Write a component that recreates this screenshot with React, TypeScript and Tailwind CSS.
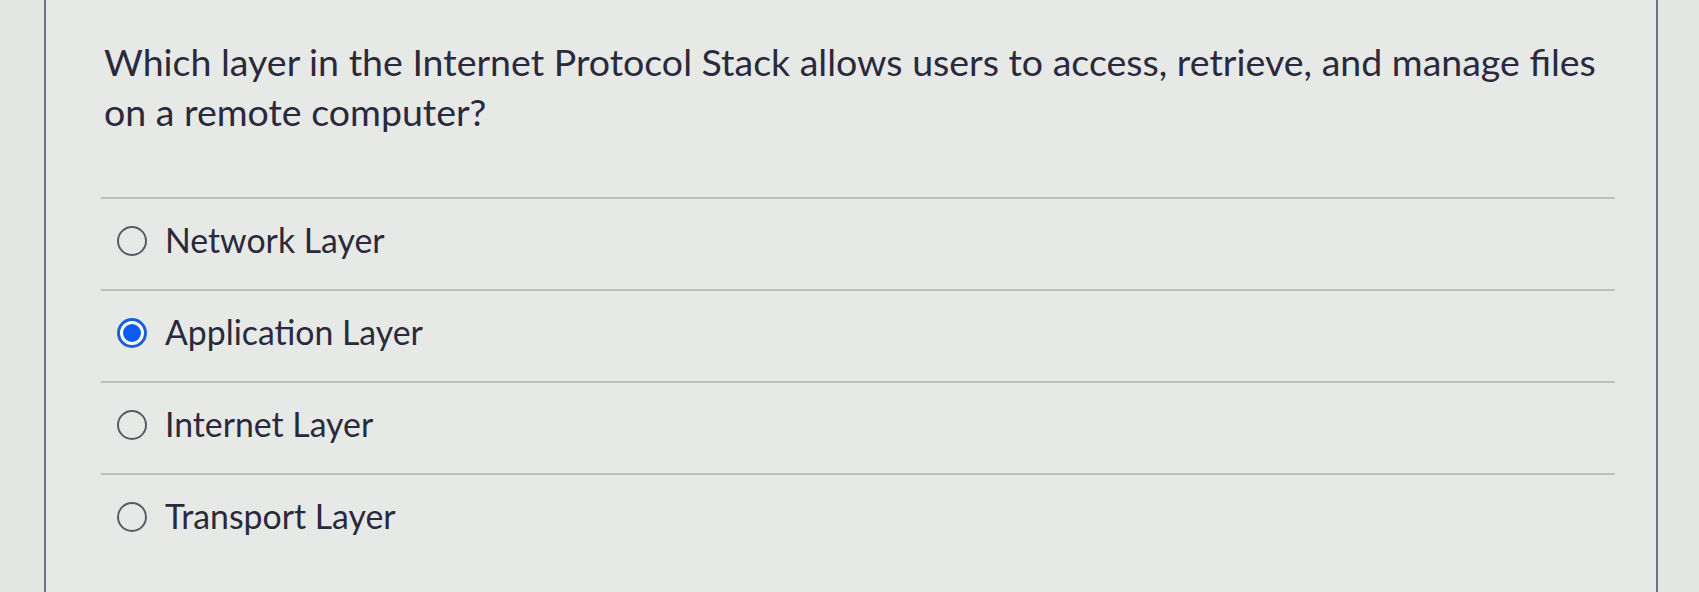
const options = [
  { label: "Network Layer", checked: false },
  { label: "Application Layer", checked: true },
  { label: "Internet Layer", checked: false },
  { label: "Transport Layer", checked: false },
];

function Radio({ checked }: { checked: boolean }) {
  if (checked) {
    return (
      <span className="flex h-[30px] w-[30px] shrink-0 items-center justify-center rounded-full border-[3px] border-[#1d5fd6] bg-white">
        <span className="block h-[18px] w-[18px] rounded-full bg-[#0b5cf2]" />
      </span>
    );
  }
  return <span className="block h-[30px] w-[30px] shrink-0 rounded-full border-2 border-[#5c5a66] bg-transparent" />;
}

export default function App() {
  return (
    <div className="flex h-[592px] w-[1699px] bg-[#e4e6e3] font-['Lato','Open_Sans',sans-serif] text-[#2b293c]">
      <div className="w-[44px] shrink-0" />
      <div className="w-[1614px] shrink-0 border-x-2 border-[#6f7282] bg-[#e7e9e6] pl-[55px] pr-[41px]">
        <p className="max-w-[1505px] pl-[3px] pt-[37px] text-[37.5px] leading-[50px]">
          Which layer in the Internet Protocol Stack allows users to access, retrieve, and manage files on a remote computer?
        </p>
        <div className="mt-[60px]">
          {options.map((o) => (
            <div key={o.label} className="flex h-[92px] items-center gap-[18px] border-t-2 border-[#bdbfbd] pb-[6px] pl-[16px]">
              <Radio checked={o.checked} />
              <span className="text-[33.8px] leading-none">{o.label}</span>
            </div>
          ))}
        </div>
      </div>
      <div className="flex-1" />
    </div>
  );
}
